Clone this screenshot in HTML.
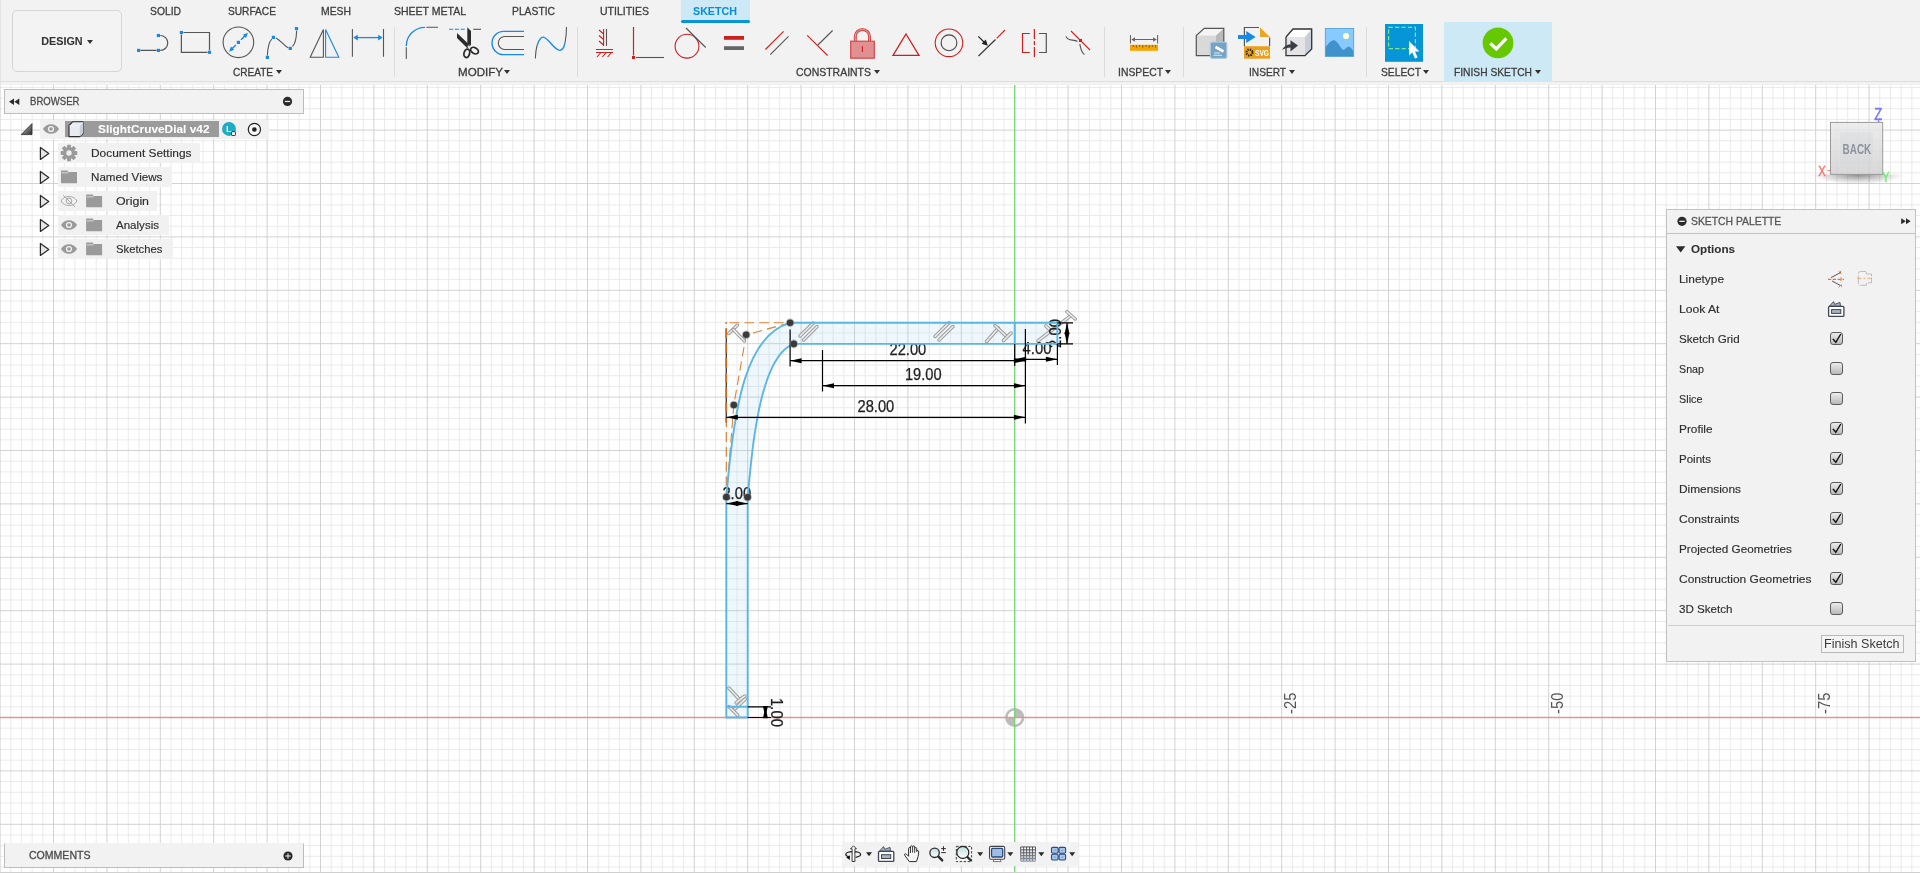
<!DOCTYPE html>
<html><head><meta charset="utf-8"><title>Fusion Sketch</title>
<style>
*{box-sizing:border-box}
html,body{margin:0;padding:0;width:1920px;height:873px;overflow:hidden;background:#fff;font-family:"Liberation Sans",sans-serif;color:#3c3c3c}
#app{position:relative;width:1920px;height:873px;overflow:hidden;will-change:transform}
.abs{position:absolute}
.t{position:absolute;white-space:nowrap;font-size:11.2px;line-height:13px;transform-origin:0 50%;color:#3c3c3c;-webkit-text-stroke:.3px currentColor}
.b{font-weight:700}
#toolbar{position:absolute;left:0;top:0;width:1920px;height:85px;background:#f2f2f2}
#toolbar .line{position:absolute;left:0;top:81px;width:1920px;height:1px;background:#dedede}
.sep{position:absolute;top:27px;width:1px;height:50px;background:#dcdcdc}
.dd{position:absolute;width:0;height:0;border-left:3px solid transparent;border-right:3px solid transparent;border-top:4px solid #333}
#design{position:absolute;left:12px;top:10px;width:110px;height:62px;border:1.5px solid #d6d6d6;border-radius:5px;background:#f3f3f3}
.panelhdr{position:absolute;background:#f2f2f2;border:1px solid #bdbdbd}
.rowbg{position:absolute;height:20px;background:#f1f1f1}
.cb{position:absolute;left:1829.6px;width:13.2px;height:12.8px;border:1px solid #5c5c5c;border-radius:3px;background:linear-gradient(#ececec,#b9b9b9)}
.cb svg{position:absolute;left:0;top:0}
svg{position:absolute;overflow:visible}
</style></head><body><div id="app">

<svg id="cv" width="1920" height="873" viewBox="0 0 1920 873" style="left:0;top:0">
<path d="M10.78 85V873M21.46 85V873M32.14 85V873M42.82 85V873M64.18 85V873M74.86 85V873M85.54 85V873M96.22 85V873M117.58 85V873M128.26 85V873M138.94 85V873M149.62 85V873M170.98 85V873M181.66 85V873M192.34 85V873M203.02 85V873M224.38 85V873M235.06 85V873M245.74 85V873M256.42 85V873M277.78 85V873M288.46 85V873M299.14 85V873M309.82 85V873M331.18 85V873M341.86 85V873M352.54 85V873M363.22 85V873M384.58 85V873M395.26 85V873M405.94 85V873M416.62 85V873M437.98 85V873M448.66 85V873M459.34 85V873M470.02 85V873M491.38 85V873M502.06 85V873M512.74 85V873M523.42 85V873M544.78 85V873M555.46 85V873M566.14 85V873M576.82 85V873M598.18 85V873M608.86 85V873M619.54 85V873M630.22 85V873M651.58 85V873M662.26 85V873M672.94 85V873M683.62 85V873M704.98 85V873M715.66 85V873M726.34 85V873M737.02 85V873M758.38 85V873M769.06 85V873M779.74 85V873M790.42 85V873M811.78 85V873M822.46 85V873M833.14 85V873M843.82 85V873M865.18 85V873M875.86 85V873M886.54 85V873M897.22 85V873M918.58 85V873M929.26 85V873M939.94 85V873M950.62 85V873M971.98 85V873M982.66 85V873M993.34 85V873M1004.02 85V873M1025.38 85V873M1036.06 85V873M1046.74 85V873M1057.42 85V873M1078.78 85V873M1089.46 85V873M1100.14 85V873M1110.82 85V873M1132.18 85V873M1142.86 85V873M1153.54 85V873M1164.22 85V873M1185.58 85V873M1196.26 85V873M1206.94 85V873M1217.62 85V873M1238.98 85V873M1249.66 85V873M1260.34 85V873M1271.02 85V873M1292.38 85V873M1303.06 85V873M1313.74 85V873M1324.42 85V873M1345.78 85V873M1356.46 85V873M1367.14 85V873M1377.82 85V873M1399.18 85V873M1409.86 85V873M1420.54 85V873M1431.22 85V873M1452.58 85V873M1463.26 85V873M1473.94 85V873M1484.62 85V873M1505.98 85V873M1516.66 85V873M1527.34 85V873M1538.02 85V873M1559.38 85V873M1570.06 85V873M1580.74 85V873M1591.42 85V873M1612.78 85V873M1623.46 85V873M1634.14 85V873M1644.82 85V873M1666.18 85V873M1676.86 85V873M1687.54 85V873M1698.22 85V873M1719.58 85V873M1730.26 85V873M1740.94 85V873M1751.62 85V873M1772.98 85V873M1783.66 85V873M1794.34 85V873M1805.02 85V873M1826.38 85V873M1837.06 85V873M1847.74 85V873M1858.42 85V873M1879.78 85V873M1890.46 85V873M1901.14 85V873M1911.82 85V873M0 87.38H1920M0 98.06H1920M0 108.74H1920M0 119.42H1920M0 140.78H1920M0 151.46H1920M0 162.14H1920M0 172.82H1920M0 194.18H1920M0 204.86H1920M0 215.54H1920M0 226.22H1920M0 247.58H1920M0 258.26H1920M0 268.94H1920M0 279.62H1920M0 300.98H1920M0 311.66H1920M0 322.34H1920M0 333.02H1920M0 354.38H1920M0 365.06H1920M0 375.74H1920M0 386.42H1920M0 407.78H1920M0 418.46H1920M0 429.14H1920M0 439.82H1920M0 461.18H1920M0 471.86H1920M0 482.54H1920M0 493.22H1920M0 514.58H1920M0 525.26H1920M0 535.94H1920M0 546.62H1920M0 567.98H1920M0 578.66H1920M0 589.34H1920M0 600.02H1920M0 621.38H1920M0 632.06H1920M0 642.74H1920M0 653.42H1920M0 674.78H1920M0 685.46H1920M0 696.14H1920M0 706.82H1920M0 728.18H1920M0 738.86H1920M0 749.54H1920M0 760.22H1920M0 781.58H1920M0 792.26H1920M0 802.94H1920M0 813.62H1920M0 834.98H1920M0 845.66H1920M0 856.34H1920M0 867.02H1920" stroke="#e8e8e8" stroke-width=".9" fill="none"/>
<path d="M0.10 85V873M53.50 85V873M106.90 85V873M160.30 85V873M213.70 85V873M267.10 85V873M320.50 85V873M373.90 85V873M427.30 85V873M480.70 85V873M534.10 85V873M587.50 85V873M640.90 85V873M694.30 85V873M747.70 85V873M801.10 85V873M854.50 85V873M907.90 85V873M961.30 85V873M1014.70 85V873M1068.10 85V873M1121.50 85V873M1174.90 85V873M1228.30 85V873M1281.70 85V873M1335.10 85V873M1388.50 85V873M1441.90 85V873M1495.30 85V873M1548.70 85V873M1602.10 85V873M1655.50 85V873M1708.90 85V873M1762.30 85V873M1815.70 85V873M1869.10 85V873M0 130.10H1920M0 183.50H1920M0 236.90H1920M0 290.30H1920M0 343.70H1920M0 397.10H1920M0 450.50H1920M0 503.90H1920M0 557.30H1920M0 610.70H1920M0 664.10H1920M0 717.50H1920M0 770.90H1920M0 824.30H1920" stroke="#cdcdcd" stroke-width=".9" fill="none"/>
<circle cx="1014.7" cy="717.5" r="8.3" fill="none" stroke="#bcbcbc" stroke-width="2.6"/>
<path d="M1014.7 717.5V709.2A8.3 8.3 0 0 1 1023.0 717.5Z M1014.7 717.5V725.8A8.3 8.3 0 0 1 1006.4000000000001 717.5Z" fill="#bcbcbc"/>
<line x1="0" y1="717.5" x2="1920" y2="717.5" stroke="#e89292" stroke-width="1.5"/>
<line x1="1014.7" y1="85" x2="1014.7" y2="873" stroke="#6fd66f" stroke-width="1.2"/>
<path d="M1057.4 322.8 L790.1 322.8 C746.2 334.8 733.8 405.0 726.4 497.0 L726.3 717.5 L747.7 717.5 L747.7 498.7 L747.7 498.7 L748.2 491.9 L748.8 485.3 L749.4 478.7 L750.1 472.2 L750.7 465.8 L751.4 459.6 L752.1 453.4 L752.8 447.4 L753.6 441.5 L754.4 435.8 L755.3 430.1 L756.2 424.6 L757.1 419.3 L758.1 414.1 L759.1 409.0 L760.2 404.1 L761.3 399.4 L762.5 394.8 L763.7 390.5 L765.0 386.3 L766.3 382.2 L767.6 378.4 L769.0 374.8 L770.4 371.3 L771.9 368.1 L773.4 365.1 L774.9 362.3 L776.5 359.7 L778.0 357.3 L779.6 355.2 L781.2 353.2 L782.8 351.5 L784.3 349.9 L785.9 348.5 L787.5 347.3 L789.0 346.3 L790.6 345.4 L792.3 344.6 L794.0 344.0 L795.7 343.4 L1057.4 343.9 Z" fill="rgba(120,190,235,0.13)" stroke="none"/>
<line x1="726.3" y1="328.6" x2="726.3" y2="422.6" stroke="#3a3a3a" stroke-width="1.3"/>
<path d="M726.3 322.8 H790.1" stroke="#dd8238" stroke-width="1.1" stroke-dasharray="9.8 5" stroke-dashoffset="11.5" fill="none"/>
<path d="M726.3 322.8 V497.0" stroke="#dd8238" stroke-width="1.2" stroke-dasharray="9.8 5" stroke-dashoffset="9.1" fill="none"/>
<rect x="725.5" y="322.1" width="1.6" height="1.4" fill="#dd8238"/>
<path d="M726.3 322.8 V422.6" stroke="#c8691c" stroke-width="1.6" stroke-dasharray="9.8 5" stroke-dashoffset="9.1" fill="none"/>
<path d="M790.1 322.8 L746.2 334.8 L733.8 405.0 L726.4 497.0" stroke="#dd8238" stroke-width="1.1" stroke-dasharray="9.5 5" fill="none"/>
<g opacity=".95"><line x1="728.8" y1="333.5" x2="737.2" y2="325.3" stroke="#969696" stroke-width="3.5" stroke-linecap="round"/><line x1="728.8" y1="333.5" x2="737.2" y2="325.3" stroke="#ececec" stroke-width="1.6" stroke-linecap="round"/><line x1="733.3" y1="329.6" x2="744.5" y2="341.0" stroke="#969696" stroke-width="3.5" stroke-linecap="round"/><line x1="733.3" y1="329.6" x2="744.5" y2="341.0" stroke="#ececec" stroke-width="1.6" stroke-linecap="round"/><line x1="800.0" y1="336.0" x2="813.0" y2="323.2" stroke="#969696" stroke-width="3.5" stroke-linecap="round"/><line x1="800.0" y1="336.0" x2="813.0" y2="323.2" stroke="#ececec" stroke-width="1.6" stroke-linecap="round"/><line x1="803.6" y1="340.0" x2="817.0" y2="326.5" stroke="#969696" stroke-width="3.5" stroke-linecap="round"/><line x1="803.6" y1="340.0" x2="817.0" y2="326.5" stroke="#ececec" stroke-width="1.6" stroke-linecap="round"/><line x1="935.0" y1="336.5" x2="949.0" y2="322.8" stroke="#969696" stroke-width="3.5" stroke-linecap="round"/><line x1="935.0" y1="336.5" x2="949.0" y2="322.8" stroke="#ececec" stroke-width="1.6" stroke-linecap="round"/><line x1="939.0" y1="340.0" x2="953.0" y2="326.5" stroke="#969696" stroke-width="3.5" stroke-linecap="round"/><line x1="939.0" y1="340.0" x2="953.0" y2="326.5" stroke="#ececec" stroke-width="1.6" stroke-linecap="round"/><line x1="986.5" y1="341.5" x2="998.5" y2="328.0" stroke="#969696" stroke-width="3.5" stroke-linecap="round"/><line x1="986.5" y1="341.5" x2="998.5" y2="328.0" stroke="#ececec" stroke-width="1.6" stroke-linecap="round"/><line x1="995.0" y1="325.5" x2="1006.0" y2="336.0" stroke="#969696" stroke-width="3.5" stroke-linecap="round"/><line x1="995.0" y1="325.5" x2="1006.0" y2="336.0" stroke="#ececec" stroke-width="1.6" stroke-linecap="round"/><line x1="1003.5" y1="340.5" x2="1011.0" y2="333.0" stroke="#969696" stroke-width="3.5" stroke-linecap="round"/><line x1="1003.5" y1="340.5" x2="1011.0" y2="333.0" stroke="#ececec" stroke-width="1.6" stroke-linecap="round"/><line x1="1038.0" y1="340.8" x2="1070.5" y2="315.8" stroke="#969696" stroke-width="3.5" stroke-linecap="round"/><line x1="1038.0" y1="340.8" x2="1070.5" y2="315.8" stroke="#ececec" stroke-width="1.6" stroke-linecap="round"/><line x1="1066.9" y1="311.8" x2="1075.2" y2="319.0" stroke="#969696" stroke-width="3.5" stroke-linecap="round"/><line x1="1066.9" y1="311.8" x2="1075.2" y2="319.0" stroke="#ececec" stroke-width="1.6" stroke-linecap="round"/><line x1="1045.8" y1="325.9" x2="1049.6" y2="329.6" stroke="#969696" stroke-width="3.5" stroke-linecap="round"/><line x1="1045.8" y1="325.9" x2="1049.6" y2="329.6" stroke="#ececec" stroke-width="1.6" stroke-linecap="round"/><line x1="728.9" y1="688.0" x2="739.8" y2="699.8" stroke="#969696" stroke-width="3.5" stroke-linecap="round"/><line x1="728.9" y1="688.0" x2="739.8" y2="699.8" stroke="#ececec" stroke-width="1.6" stroke-linecap="round"/><line x1="736.1" y1="702.9" x2="744.9" y2="696.0" stroke="#969696" stroke-width="3.5" stroke-linecap="round"/><line x1="736.1" y1="702.9" x2="744.9" y2="696.0" stroke="#ececec" stroke-width="1.6" stroke-linecap="round"/><line x1="745.3" y1="698.9" x2="733.3" y2="710.5" stroke="#969696" stroke-width="3.5" stroke-linecap="round"/><line x1="745.3" y1="698.9" x2="733.3" y2="710.5" stroke="#ececec" stroke-width="1.6" stroke-linecap="round"/><line x1="728.9" y1="706.5" x2="737.7" y2="715.3" stroke="#969696" stroke-width="3.5" stroke-linecap="round"/><line x1="728.9" y1="706.5" x2="737.7" y2="715.3" stroke="#ececec" stroke-width="1.6" stroke-linecap="round"/></g>
<text x="907.9" y="355.3" font-family="Liberation Sans, sans-serif" font-size="15.6" text-anchor="middle" fill="#1e1e1e" stroke="#1e1e1e" stroke-width="0.25" textLength="36.8" lengthAdjust="spacingAndGlyphs">22.00</text>
<text x="923.3" y="380.2" font-family="Liberation Sans, sans-serif" font-size="15.6" text-anchor="middle" fill="#1e1e1e" stroke="#1e1e1e" stroke-width="0.25" textLength="36.8" lengthAdjust="spacingAndGlyphs">19.00</text>
<text x="875.9" y="411.8" font-family="Liberation Sans, sans-serif" font-size="15.6" text-anchor="middle" fill="#1e1e1e" stroke="#1e1e1e" stroke-width="0.25" textLength="36.8" lengthAdjust="spacingAndGlyphs">28.00</text>
<text x="1037.0" y="353.8" font-family="Liberation Sans, sans-serif" font-size="15.6" text-anchor="middle" fill="#1e1e1e" stroke="#1e1e1e" stroke-width="0.25" textLength="28.8" lengthAdjust="spacingAndGlyphs">4.00</text>
<text x="736.8" y="499.3" font-family="Liberation Sans, sans-serif" font-size="15.6" text-anchor="middle" fill="#1e1e1e" stroke="#1e1e1e" stroke-width="0.25" textLength="28.8" lengthAdjust="spacingAndGlyphs">2.00</text>
<text x="1060.6" y="333.5" font-family="Liberation Sans, sans-serif" font-size="15.6" text-anchor="middle" fill="#1e1e1e" stroke="#1e1e1e" stroke-width="0.25" textLength="28.8" lengthAdjust="spacingAndGlyphs" transform="rotate(-90 1060.6 333.5)">2.00</text>
<text x="770.5" y="712.5" font-family="Liberation Sans, sans-serif" font-size="15.6" text-anchor="middle" fill="#1e1e1e" stroke="#1e1e1e" stroke-width="0.25" textLength="28.8" lengthAdjust="spacingAndGlyphs" transform="rotate(90 770.5 712.5)">1.00</text>
<path d="M790.1 322.8 C746.2 334.8 733.8 405.0 726.4 497.0 M795.7 343.4 L794.0 344.0 L792.3 344.6 L790.6 345.4 L789.0 346.3 L787.5 347.3 L785.9 348.5 L784.3 349.9 L782.8 351.5 L781.2 353.2 L779.6 355.2 L778.0 357.3 L776.5 359.7 L774.9 362.3 L773.4 365.1 L771.9 368.1 L770.4 371.3 L769.0 374.8 L767.6 378.4 L766.3 382.2 L765.0 386.3 L763.7 390.5 L762.5 394.8 L761.3 399.4 L760.2 404.1 L759.1 409.0 L758.1 414.1 L757.1 419.3 L756.2 424.6 L755.3 430.1 L754.4 435.8 L753.6 441.5 L752.8 447.4 L752.1 453.4 L751.4 459.6 L750.7 465.8 L750.1 472.2 L749.4 478.7 L748.8 485.3 L748.2 491.9 L747.7 498.7 M790.1 322.8 H1057.4 V343.9 H795.7 M1014.7 322.8 V343.9 M726.3 497.0 V717.5 H747.7 V498.7 M726.3 706.8 H747.7" stroke="#5cb6e4" stroke-width="1.9" fill="none" stroke-linejoin="miter"/>
<path d="M790.1 329.5V366.5 M822.5 350V391.5 M1025.4 329V423.5 M1014.7 344V366 M1057.4 344V365 M790.1 360.7H1025.4 M822.5 385.7H1025.4 M726.3 417.3H1025.4 M1014.7 359.3H1057.4 M1057.4 322.8H1073 M1057.4 343.9H1073 M1067 322.8V343.9 M747.7 706.8H771 M747.7 717.5H771 M765.4 706.8V717.5 M726.3 503.6H747.7" stroke="#000" stroke-width="1.2" fill="none"/>
<polygon points="790.1,360.7 801.6,358.2 801.6,363.2" fill="#000"/>
<polygon points="1025.4,360.7 1013.9,363.2 1013.9,358.2" fill="#000"/>
<polygon points="822.5,385.7 834.0,383.2 834.0,388.2" fill="#000"/>
<polygon points="1025.4,385.7 1013.9,388.2 1013.9,383.2" fill="#000"/>
<polygon points="726.3,417.3 737.8,414.8 737.8,419.8" fill="#000"/>
<polygon points="1025.4,417.3 1013.9,419.8 1013.9,414.8" fill="#000"/>
<polygon points="1014.7,359.3 1026.2,356.8 1026.2,361.8" fill="#000"/>
<polygon points="1057.4,359.3 1045.9,361.8 1045.9,356.8" fill="#000"/>
<polygon points="1067.0,322.8 1069.5,334.3 1064.5,334.3" fill="#000"/>
<polygon points="1067.0,343.9 1064.5,332.4 1069.5,332.4" fill="#000"/>
<polygon points="726.3,503.6 737.8,501.1 737.8,506.1" fill="#000"/>
<polygon points="747.7,503.6 736.2,506.1 736.2,501.1" fill="#000"/>
<polygon points="765.4,706.8 767.9,718.3 762.9,718.3" fill="#000"/>
<polygon points="765.4,717.5 762.9,706.0 767.9,706.0" fill="#000"/>
<circle cx="790.1" cy="322.8" r="4.3" fill="#8a8a8a" opacity=".55"/><circle cx="790.1" cy="322.8" r="3.3" fill="#3a3a3a"/>
<circle cx="746.2" cy="334.8" r="4.3" fill="#8a8a8a" opacity=".55"/><circle cx="746.2" cy="334.8" r="3.3" fill="#3a3a3a"/>
<circle cx="733.8" cy="405.0" r="4.3" fill="#8a8a8a" opacity=".55"/><circle cx="733.8" cy="405.0" r="3.3" fill="#3a3a3a"/>
<circle cx="726.4" cy="497.0" r="4.3" fill="#8a8a8a" opacity=".55"/><circle cx="726.4" cy="497.0" r="3.3" fill="#3a3a3a"/>
<circle cx="793.8" cy="343.9" r="4.3" fill="#8a8a8a" opacity=".55"/><circle cx="793.8" cy="343.9" r="3.3" fill="#3a3a3a"/>
<circle cx="747.6" cy="497.3" r="4.3" fill="#8a8a8a" opacity=".55"/><circle cx="747.6" cy="497.3" r="3.3" fill="#3a3a3a"/>
<text x="1295.9" y="713.9" font-family="Liberation Sans, sans-serif" font-size="16.4" text-anchor="start" fill="#555" stroke="#555" stroke-width="0" textLength="21.2" lengthAdjust="spacingAndGlyphs" transform="rotate(-90 1295.9 713.9)">-25</text>
<text x="1562.9" y="713.9" font-family="Liberation Sans, sans-serif" font-size="16.4" text-anchor="start" fill="#555" stroke="#555" stroke-width="0" textLength="21.2" lengthAdjust="spacingAndGlyphs" transform="rotate(-90 1562.9 713.9)">-50</text>
<text x="1829.9" y="713.9" font-family="Liberation Sans, sans-serif" font-size="16.4" text-anchor="start" fill="#555" stroke="#555" stroke-width="0" textLength="21.2" lengthAdjust="spacingAndGlyphs" transform="rotate(-90 1829.9 713.9)">-75</text>
</svg>
<svg width="120" height="100" viewBox="1800 100 120 100" style="left:1800px;top:100px"><defs><linearGradient id="vg" x1="0" y1="0" x2="0" y2="1"><stop offset="0" stop-color="#e9e9e9"/><stop offset="1" stop-color="#cfcfcf"/></linearGradient><radialGradient id="sh" cx=".5" cy="0" r=".5" gradientTransform="matrix(1 0 0 2 0 0)"><stop offset="0" stop-color="#000" stop-opacity=".45"/><stop offset=".6" stop-color="#000" stop-opacity=".16"/><stop offset="1" stop-color="#000" stop-opacity="0"/></radialGradient></defs><rect x="1812" y="174.4" width="92" height="10" fill="url(#sh)"/><rect x="1830.5" y="122.4" width="52.2" height="52" fill="url(#vg)" fill-opacity=".82" stroke="#999" stroke-width="1"/><rect x="1840" y="132" width="33" height="33" fill="#d5d7dc" fill-opacity=".4"/><text x="1842.6" y="153.9" font-family="Liberation Sans, sans-serif" font-weight="700" font-size="14.6" fill="#8d929c" textLength="28.6" lengthAdjust="spacingAndGlyphs">BACK</text><text x="1874.2" y="119.9" font-family="Liberation Sans, sans-serif" font-size="16" fill="#7878f2" stroke="#7878f2" stroke-width=".4" textLength="8" lengthAdjust="spacingAndGlyphs">Z</text><text x="1818.3" y="175.8" font-family="Liberation Sans, sans-serif" font-size="14.5" fill="#ff6a6a" stroke="#ff6a6a" stroke-width=".4" textLength="7.5" lengthAdjust="spacingAndGlyphs">X</text><text x="1882.2" y="182.3" font-family="Liberation Sans, sans-serif" font-size="14.5" fill="#6cec6c" stroke="#6cec6c" stroke-width=".4" textLength="7.2" lengthAdjust="spacingAndGlyphs">Y</text><path d="M1827.5 170.5H1830" stroke="#ff8080" stroke-width="1.2"/><path d="M1878.5 120.3V122" stroke="#7878f2" stroke-width="1.2"/></svg>
<div class="panelhdr" style="left:4px;top:89px;width:300px;height:24.5px"></div>
<div class="t" style="left:29.5px;top:95.2px;font-size:11.2px;line-height:13px;color:#4a4a4a;transform:scaleX(0.856);">BROWSER</div>
<div class="rowbg" style="left:40px;top:120.3px;width:228.7px;height:18.5px"></div>
<div class="abs" style="left:65px;top:121px;width:154px;height:16px;background:#9b9b9b"></div>
<div class="rowbg" style="left:58.3px;top:143.3px;width:141.5px;height:19.4px"></div>
<div class="rowbg" style="left:58.3px;top:167.3px;width:113.5px;height:19.4px"></div>
<div class="rowbg" style="left:58.3px;top:191.3px;width:98.6px;height:19.4px"></div>
<div class="rowbg" style="left:58.3px;top:215.3px;width:110.6px;height:19.4px"></div>
<div class="rowbg" style="left:58.3px;top:239.3px;width:114.3px;height:19.4px"></div>
<div class="t" style="left:98.0px;top:122.6px;font-size:11.2px;line-height:13px;font-weight:700;color:#fff;transform:scaleX(1.061);-webkit-text-stroke-width:.05px;">SlightCruveDial v42</div>
<div class="t" style="left:90.5px;top:146.6px;font-size:11.2px;line-height:13px;color:#2e2e2e;transform:scaleX(1.063);-webkit-text-stroke-width:.15px;">Document Settings</div>
<div class="t" style="left:91.0px;top:170.6px;font-size:11.2px;line-height:13px;color:#2e2e2e;transform:scaleX(1.037);-webkit-text-stroke-width:.15px;">Named Views</div>
<div class="t" style="left:116.0px;top:194.6px;font-size:11.2px;line-height:13px;color:#2e2e2e;transform:scaleX(1.106);-webkit-text-stroke-width:.15px;">Origin</div>
<div class="t" style="left:116.0px;top:218.6px;font-size:11.2px;line-height:13px;color:#2e2e2e;transform:scaleX(1.032);-webkit-text-stroke-width:.15px;">Analysis</div>
<div class="t" style="left:116.0px;top:242.6px;font-size:11.2px;line-height:13px;color:#2e2e2e;transform:scaleX(1.006);-webkit-text-stroke-width:.15px;">Sketches</div>
<svg width="320" height="270" viewBox="0 0 320 270" style="left:0;top:0"><defs><linearGradient id="tg" x1="0" y1="0" x2="1" y2="1"><stop offset="0" stop-color="#d0d0d0"/><stop offset="1" stop-color="#2a2a2a"/></linearGradient></defs><polygon points="9,101.8 14,98.6 14,105" fill="#2a2a2a"/><polygon points="14.3,101.8 19.3,98.6 19.3,105" fill="#2a2a2a"/><circle cx="287.5" cy="101.4" r="4.6" fill="#2a2a2a"/><rect x="284.8" y="100.8" width="5.4" height="1.3" fill="#e8e8e8"/><polygon points="21.2,134.6 32,134.6 32,123.6" fill="url(#tg)" stroke="#2a2a2a" stroke-width=".8"/><path d="M43 129C46 122.7 56 122.7 59 129C56 135.3 46 135.3 43 129Z" fill="#9a9a9a"/><circle cx="51" cy="129" r="3.1" fill="#f0f0f0"/><circle cx="51" cy="129" r="1.8" fill="#9a9a9a"/><path d="M69 125.5L72.5 121.8H83.3V133L79.8 136.6H69Z" fill="#e8ebf1" stroke="#2c2c2c" stroke-width="1.1" stroke-linejoin="round"/><path d="M79.8 125.5V136.6L83.3 133V121.8Z" fill="#c9ced8"/><path d="M69 125.5H79.8L83.3 121.8" fill="none" stroke="#fff" stroke-width=".6" opacity=".7"/><circle cx="229" cy="128.9" r="7" fill="#1eabc4"/><text x="226" y="132.3" font-family="Liberation Sans, sans-serif" font-weight="700" font-size="9.5" fill="#e8f8fb">L</text><rect x="231.6" y="131.7" width="3.8" height="3.8" rx=".6" fill="#fff" stroke="#222" stroke-width=".9"/><circle cx="254.4" cy="129.5" r="6.1" fill="#f8f8f8" stroke="#222" stroke-width="1.2"/><circle cx="254.4" cy="129.5" r="2.3" fill="#222"/><path d="M40.4 147.4L48.8 153.4L40.4 159.4Z" fill="#e6e6ea" stroke="#2a2a2a" stroke-width="1.25" stroke-linejoin="round"/><path d="M40.4 171.4L48.8 177.4L40.4 183.4Z" fill="#e6e6ea" stroke="#2a2a2a" stroke-width="1.25" stroke-linejoin="round"/><path d="M40.4 195.4L48.8 201.4L40.4 207.4Z" fill="#e6e6ea" stroke="#2a2a2a" stroke-width="1.25" stroke-linejoin="round"/><path d="M40.4 219.4L48.8 225.4L40.4 231.4Z" fill="#e6e6ea" stroke="#2a2a2a" stroke-width="1.25" stroke-linejoin="round"/><path d="M40.4 243.4L48.8 249.4L40.4 255.4Z" fill="#e6e6ea" stroke="#2a2a2a" stroke-width="1.25" stroke-linejoin="round"/><rect x="67.1" y="144.7" width="3.8" height="16.6" rx=".6" fill="#9a9a9a" transform="rotate(0 69 153)"/><rect x="67.1" y="144.7" width="3.8" height="16.6" rx=".6" fill="#9a9a9a" transform="rotate(45 69 153)"/><rect x="67.1" y="144.7" width="3.8" height="16.6" rx=".6" fill="#9a9a9a" transform="rotate(90 69 153)"/><rect x="67.1" y="144.7" width="3.8" height="16.6" rx=".6" fill="#9a9a9a" transform="rotate(135 69 153)"/><circle cx="69" cy="153" r="6" fill="#9a9a9a"/><circle cx="69" cy="153" r="2.7" fill="#f0f0f0"/><path d="M61 170.6H67.5L68.5 172H77V183.3H61Z" fill="#9a9a9a"/><path d="M61.5 172.8H68.5" stroke="#f0f0f0" stroke-width=".7"/><path d="M61 201C64 195 74 195 77 201C74 207 64 207 61 201Z" fill="none" stroke="#a8a8a8" stroke-width="1"/><circle cx="69" cy="201" r="2.8" fill="none" stroke="#a8a8a8" stroke-width="1"/><path d="M63 195L75 207" stroke="#a8a8a8" stroke-width="1"/><path d="M86.1 194.6H92.6L93.6 196H102.1V207.3H86.1Z" fill="#9a9a9a"/><path d="M86.6 196.8H93.6" stroke="#f0f0f0" stroke-width=".7"/><path d="M61 225C64 218.7 74 218.7 77 225C74 231.3 64 231.3 61 225Z" fill="#9a9a9a"/><circle cx="69" cy="225" r="3.1" fill="#f0f0f0"/><circle cx="69" cy="225" r="1.8" fill="#9a9a9a"/><path d="M86.1 218.6H92.6L93.6 220H102.1V231.3H86.1Z" fill="#9a9a9a"/><path d="M86.6 220.8H93.6" stroke="#f0f0f0" stroke-width=".7"/><path d="M61 249C64 242.7 74 242.7 77 249C74 255.3 64 255.3 61 249Z" fill="#9a9a9a"/><circle cx="69" cy="249" r="3.1" fill="#f0f0f0"/><circle cx="69" cy="249" r="1.8" fill="#9a9a9a"/><path d="M86.1 242.6H92.6L93.6 244H102.1V255.3H86.1Z" fill="#9a9a9a"/><path d="M86.6 244.8H93.6" stroke="#f0f0f0" stroke-width=".7"/></svg>
<div class="panelhdr" style="left:4px;top:843px;width:300px;height:24.5px;border-top-color:#f2f2f2"></div>
<div class="t" style="left:29.4px;top:849.1px;font-size:11.2px;line-height:13px;color:#4a4a4a;transform:scaleX(0.942);">COMMENTS</div>
<svg width="20" height="20" viewBox="0 0 20 20" style="left:277.5px;top:845.5px"><circle cx="10" cy="10" r="4.6" fill="#2a2a2a"/><path d="M7.3 10H12.7M10 7.3V12.7" stroke="#f4f4f4" stroke-width="1"/></svg>
<div class="abs" style="left:1666px;top:209px;width:250px;height:452.5px;background:#f2f2f2;border:1px solid #c2c2c2"></div>
<div class="abs" style="left:1666px;top:233px;width:250px;height:1px;background:#c2c2c2"></div>
<div class="abs" style="left:1667.5px;top:625px;width:247px;height:1px;background:#cfcfcf"></div>
<div class="t" style="left:1691.0px;top:215.1px;font-size:11.2px;line-height:13px;color:#555;transform:scaleX(0.927);">SKETCH PALETTE</div>
<div class="t" style="left:1691.0px;top:242.9px;font-size:11.2px;line-height:13px;font-weight:700;color:#2e2e2e;transform:scaleX(1.041);-webkit-text-stroke-width:.05px;">Options</div>
<div class="t" style="left:1679.3px;top:273.1px;font-size:11.2px;line-height:13px;color:#2e2e2e;transform:scaleX(1.064);-webkit-text-stroke-width:.15px;">Linetype</div>
<div class="t" style="left:1679.3px;top:303.1px;font-size:11.2px;line-height:13px;color:#2e2e2e;transform:scaleX(1.085);-webkit-text-stroke-width:.15px;">Look At</div>
<div class="t" style="left:1679.3px;top:333.1px;font-size:11.2px;line-height:13px;color:#2e2e2e;transform:scaleX(1.037);-webkit-text-stroke-width:.15px;">Sketch Grid</div>
<div class="t" style="left:1679.3px;top:363.1px;font-size:11.2px;line-height:13px;color:#2e2e2e;transform:scaleX(0.956);-webkit-text-stroke-width:.15px;">Snap</div>
<div class="t" style="left:1679.3px;top:393.1px;font-size:11.2px;line-height:13px;color:#2e2e2e;transform:scaleX(0.969);-webkit-text-stroke-width:.15px;">Slice</div>
<div class="t" style="left:1679.3px;top:423.1px;font-size:11.2px;line-height:13px;color:#2e2e2e;transform:scaleX(1.056);-webkit-text-stroke-width:.15px;">Profile</div>
<div class="t" style="left:1679.3px;top:453.1px;font-size:11.2px;line-height:13px;color:#2e2e2e;transform:scaleX(1.029);-webkit-text-stroke-width:.15px;">Points</div>
<div class="t" style="left:1679.3px;top:483.1px;font-size:11.2px;line-height:13px;color:#2e2e2e;transform:scaleX(1.061);-webkit-text-stroke-width:.15px;">Dimensions</div>
<div class="t" style="left:1679.3px;top:513.1px;font-size:11.2px;line-height:13px;color:#2e2e2e;transform:scaleX(1.069);-webkit-text-stroke-width:.15px;">Constraints</div>
<div class="t" style="left:1679.3px;top:543.1px;font-size:11.2px;line-height:13px;color:#2e2e2e;transform:scaleX(1.044);-webkit-text-stroke-width:.15px;">Projected Geometries</div>
<div class="t" style="left:1679.3px;top:573.1px;font-size:11.2px;line-height:13px;color:#2e2e2e;transform:scaleX(1.071);-webkit-text-stroke-width:.15px;">Construction Geometries</div>
<div class="t" style="left:1679.3px;top:603.1px;font-size:11.2px;line-height:13px;color:#2e2e2e;transform:scaleX(1.036);-webkit-text-stroke-width:.15px;">3D Sketch</div>
<div class="cb" style="top:332.1px"><svg width="13" height="13" viewBox="0 0 13 13" style="left:-1px;top:-1px"><path d="M2.9 6.9L5.8 10.3L10.8 2" stroke="#111" stroke-width="1.45" fill="none"/></svg></div>
<div class="cb" style="top:362.1px"></div>
<div class="cb" style="top:392.1px"></div>
<div class="cb" style="top:422.1px"><svg width="13" height="13" viewBox="0 0 13 13" style="left:-1px;top:-1px"><path d="M2.9 6.9L5.8 10.3L10.8 2" stroke="#111" stroke-width="1.45" fill="none"/></svg></div>
<div class="cb" style="top:452.1px"><svg width="13" height="13" viewBox="0 0 13 13" style="left:-1px;top:-1px"><path d="M2.9 6.9L5.8 10.3L10.8 2" stroke="#111" stroke-width="1.45" fill="none"/></svg></div>
<div class="cb" style="top:482.1px"><svg width="13" height="13" viewBox="0 0 13 13" style="left:-1px;top:-1px"><path d="M2.9 6.9L5.8 10.3L10.8 2" stroke="#111" stroke-width="1.45" fill="none"/></svg></div>
<div class="cb" style="top:512.1px"><svg width="13" height="13" viewBox="0 0 13 13" style="left:-1px;top:-1px"><path d="M2.9 6.9L5.8 10.3L10.8 2" stroke="#111" stroke-width="1.45" fill="none"/></svg></div>
<div class="cb" style="top:542.1px"><svg width="13" height="13" viewBox="0 0 13 13" style="left:-1px;top:-1px"><path d="M2.9 6.9L5.8 10.3L10.8 2" stroke="#111" stroke-width="1.45" fill="none"/></svg></div>
<div class="cb" style="top:572.1px"><svg width="13" height="13" viewBox="0 0 13 13" style="left:-1px;top:-1px"><path d="M2.9 6.9L5.8 10.3L10.8 2" stroke="#111" stroke-width="1.45" fill="none"/></svg></div>
<div class="cb" style="top:602.1px"></div>
<div class="abs" style="left:1820.5px;top:634.5px;width:83.5px;height:18px;border:1px solid #b9b9b9;background:#f4f4f4"></div>
<div class="t" style="left:1824.0px;top:636.4px;font-size:13px;line-height:15px;color:#3a3a3a;transform:scaleX(0.967);-webkit-text-stroke-width:.15px;-webkit-text-stroke:0;">Finish Sketch</div>
<svg width="260" height="120" viewBox="1660 205 260 120" style="left:1660px;top:205px"><circle cx="1682" cy="221.3" r="4.6" fill="#2a2a2a"/><rect x="1679.3" y="220.7" width="5.4" height="1.3" fill="#e8e8e8"/><polygon points="1901.2,218.3 1905.8,221.3 1901.2,224.3" fill="#2a2a2a"/><polygon points="1906,218.3 1910.6,221.3 1906,224.3" fill="#2a2a2a"/><polygon points="1676,246.3 1685.4,246.3 1680.7,252.6" fill="#2a2a2a"/><path d="M1828 279.3H1844" stroke="#e07a28" stroke-width="1.2" stroke-dasharray="3.2 1.6"/><path d="M1831 277.6L1841 272.3 M1832 281L1842 286.3" stroke="#555" stroke-width="1"/><path d="M1838.5 271.2L1841.5 274 M1841.2 270.8L1839 273.5 M1838.5 287.3L1841.5 284.5 M1841 277.4V281.3" stroke="#e07a28" stroke-width="1"/><path d="M1866 271.5H1860.5Q1858.3 271.5 1858.3 273.7V283Q1858.3 285.3 1860.5 285.3H1866.5V282.8H1871.5V274H1866.5Z" stroke="#bdbdbd" stroke-width="1" fill="none" stroke-dasharray="9 1.5"/><path d="M1857 278.4H1873" stroke="#f2b78d" stroke-width="1.1" stroke-dasharray="4.5 2 1.8 2"/><path d="M1829.3 306.2L1833.6 301.6L1834.6 304.4L1840 302.4L1840.5 306.2Z" fill="#aab3c4" stroke="#3d4654" stroke-width=".9" stroke-linejoin="round"/><rect x="1828.6" y="306.4" width="15.3" height="10" rx="1" fill="#fff" stroke="#3d4654" stroke-width="1.3"/><rect x="1831.6" y="309.6" width="9.2" height="3.8" fill="#aab3c4" stroke="#3d4654" stroke-width="1"/></svg>
<div class="abs" style="left:842.3px;top:842.3px;width:236px;height:23.5px;background:#f2f2f2"></div>
<svg width="240" height="30" viewBox="840 840 240 30" style="left:840px;top:840px"><defs><linearGradient id="gg" x1="0" y1="0" x2="0" y2="1"><stop offset="0" stop-color="#3e3e3e"/><stop offset="1" stop-color="#8f97a8"/></linearGradient><linearGradient id="lg" x1="0" y1="0" x2="0" y2="1"><stop offset="0" stop-color="#bfdcdf"/><stop offset="1" stop-color="#fff"/></linearGradient></defs><ellipse cx="853.2" cy="854.6" rx="7.4" ry="2.9" fill="none" stroke="#222" stroke-width="1.2" stroke-dasharray="34 6" stroke-dashoffset="-12"/><path d="M852.1 861.5V848.8H850.6L853.5 845.8L856.4 848.8H854.9V861.5Z" fill="#fff" stroke="#222" stroke-width=".9"/><polygon points="846.2,857.6 849.8,855.2 849.8,860" fill="#111"/><polygon points="866,852.2 872,852.2 869,856.2" fill="#2a2a2a"/><path d="M879.4 851.2L883.6 846.5L884.6 849.4L890 847.4L890.5 851.2Z" fill="#aab3c4" stroke="#3d4654" stroke-width=".9" stroke-linejoin="round"/><rect x="878.5" y="851.4" width="15.3" height="10" rx="1" fill="#fff" stroke="#3d4654" stroke-width="1.3"/><rect x="881.5" y="854.7" width="9.2" height="3.8" fill="#aab3c4" stroke="#3d4654" stroke-width="1"/><path d="M909.3 861.6C907.5 859 906 857 904.6 855.2C904 854 905.5 853.3 906.6 854.3L908.6 856.3V848.6C908.6 847.2 910.4 847.2 910.5 848.6V846.8C910.6 845.5 912.5 845.5 912.6 846.8V846.6C912.7 845.6 914.6 845.6 914.7 846.8V848.3C914.8 847.2 916.6 847.2 916.7 848.5V851.5C917 850 918.8 850.2 918.7 851.8C918.6 855 918 858 916.3 861.6Z" fill="#f4f6f8" stroke="#2a2a2a" stroke-width="1" stroke-linejoin="round"/><path d="M910.5 848.6V853 M912.6 846.8V852.6 M914.7 848V852.8" stroke="#2a2a2a" stroke-width=".9"/><path d="M938 856.2L942.2 860.4" stroke="#2a2a2a" stroke-width="2.4" stroke-linecap="round"/><circle cx="934.6" cy="852.8" r="4.7" fill="url(#lg)" stroke="#2a2a2a" stroke-width="1.3"/><path d="M941.2 848.6H945.8 M943.5 846.3V850.9 M941.2 852.6H945.8" stroke="#2a2a2a" stroke-width="1"/><rect x="956.3" y="846.4" width="15.3" height="15.2" fill="none" stroke="#2a2a2a" stroke-width=".9" stroke-dasharray="2.4 1.6"/><path d="M967.2 856.8L970.6 860.2" stroke="#2a2a2a" stroke-width="2.3" stroke-linecap="round"/><circle cx="962.8" cy="852.4" r="6" fill="url(#lg)" stroke="#222" stroke-width="1.2"/><polygon points="977.2,852.2 983.2,852.2 980.2,856.2" fill="#2a2a2a"/><path d="M994 859.3L993.2 861.6H1001L1000.2 859.3Z" fill="#fff" stroke="#555" stroke-width=".8"/><rect x="989.5" y="846.4" width="15.2" height="12.8" rx="1.5" fill="#fff" stroke="#444" stroke-width="1.1"/><rect x="991.5" y="848.4" width="11.2" height="8.6" rx="1" fill="#9fbde1" stroke="#2a4a80" stroke-width="1.3"/><polygon points="1007.3,852.2 1013.3,852.2 1010.3,856.2" fill="#2a2a2a"/><rect x="1020.2" y="846.4" width="15.7" height="15.4" rx="1.2" fill="url(#gg)"/><rect x="1021.20" y="847.40" width="2" height="1.95" fill="#fff" fill-opacity="1.00"/><rect x="1021.20" y="850.30" width="2" height="1.95" fill="#fff" fill-opacity="0.87"/><rect x="1021.20" y="853.20" width="2" height="1.95" fill="#fff" fill-opacity="0.74"/><rect x="1021.20" y="856.10" width="2" height="1.95" fill="#fff" fill-opacity="0.61"/><rect x="1021.20" y="859.00" width="2" height="1.95" fill="#fff" fill-opacity="0.48"/><rect x="1024.15" y="847.40" width="2" height="1.95" fill="#fff" fill-opacity="1.00"/><rect x="1024.15" y="850.30" width="2" height="1.95" fill="#fff" fill-opacity="0.87"/><rect x="1024.15" y="853.20" width="2" height="1.95" fill="#fff" fill-opacity="0.74"/><rect x="1024.15" y="856.10" width="2" height="1.95" fill="#fff" fill-opacity="0.61"/><rect x="1024.15" y="859.00" width="2" height="1.95" fill="#fff" fill-opacity="0.48"/><rect x="1027.10" y="847.40" width="2" height="1.95" fill="#fff" fill-opacity="1.00"/><rect x="1027.10" y="850.30" width="2" height="1.95" fill="#fff" fill-opacity="0.87"/><rect x="1027.10" y="853.20" width="2" height="1.95" fill="#fff" fill-opacity="0.74"/><rect x="1027.10" y="856.10" width="2" height="1.95" fill="#fff" fill-opacity="0.61"/><rect x="1027.10" y="859.00" width="2" height="1.95" fill="#fff" fill-opacity="0.48"/><rect x="1030.05" y="847.40" width="2" height="1.95" fill="#fff" fill-opacity="1.00"/><rect x="1030.05" y="850.30" width="2" height="1.95" fill="#fff" fill-opacity="0.87"/><rect x="1030.05" y="853.20" width="2" height="1.95" fill="#fff" fill-opacity="0.74"/><rect x="1030.05" y="856.10" width="2" height="1.95" fill="#fff" fill-opacity="0.61"/><rect x="1030.05" y="859.00" width="2" height="1.95" fill="#fff" fill-opacity="0.48"/><rect x="1033.00" y="847.40" width="2" height="1.95" fill="#fff" fill-opacity="1.00"/><rect x="1033.00" y="850.30" width="2" height="1.95" fill="#fff" fill-opacity="0.87"/><rect x="1033.00" y="853.20" width="2" height="1.95" fill="#fff" fill-opacity="0.74"/><rect x="1033.00" y="856.10" width="2" height="1.95" fill="#fff" fill-opacity="0.61"/><rect x="1033.00" y="859.00" width="2" height="1.95" fill="#fff" fill-opacity="0.48"/><polygon points="1038.3,852.2 1044.3,852.2 1041.3,856.2" fill="#2a2a2a"/><rect x="1051.5" y="847.4" width="6.6" height="5.8" rx="1.2" fill="#a9c5e7" stroke="#2a4a80" stroke-width="1.1"/><rect x="1053.7" y="849.4" width="2.3" height="1.7" fill="#8db0dc"/><rect x="1059" y="847.4" width="6.6" height="5.8" rx="1.2" fill="#a9c5e7" stroke="#2a4a80" stroke-width="1.1"/><rect x="1061.2" y="849.4" width="2.3" height="1.7" fill="#8db0dc"/><rect x="1051.5" y="854.2" width="6.6" height="5.8" rx="1.2" fill="#a9c5e7" stroke="#2a4a80" stroke-width="1.1"/><rect x="1053.7" y="856.2" width="2.3" height="1.7" fill="#8db0dc"/><rect x="1059" y="854.2" width="6.6" height="5.8" rx="1.2" fill="#a9c5e7" stroke="#2a4a80" stroke-width="1.1"/><rect x="1061.2" y="856.2" width="2.3" height="1.7" fill="#8db0dc"/><polygon points="1069.2,852.2 1075.2,852.2 1072.2,856.2" fill="#2a2a2a"/></svg>
<div id="toolbar"><div class="line"></div>
<div class="abs" style="left:0;top:0;width:1px;height:85px;background:#e2e2e2"></div>
<div class="abs" style="left:681px;top:0;width:69px;height:22px;background:#cde9f6"></div>
<div class="abs" style="left:681px;top:20.3px;width:69px;height:3px;background:#0696d7;border-radius:1.5px"></div>
<div class="abs" style="left:1444px;top:22px;width:108px;height:59.5px;background:#cde9f6"></div>
<div id="design"></div>
<div class="sep" style="left:394px"></div>
<div class="sep" style="left:577px"></div>
<div class="sep" style="left:1104px"></div>
<div class="sep" style="left:1183px"></div>
<div class="sep" style="left:1366px"></div>
<div class="t" style="left:150.0px;top:4.8px;font-size:11.2px;line-height:13px;transform:scaleX(0.923);">SOLID</div>
<div class="t" style="left:228.0px;top:4.8px;font-size:11.2px;line-height:13px;transform:scaleX(0.908);">SURFACE</div>
<div class="t" style="left:321.0px;top:4.8px;font-size:11.2px;line-height:13px;transform:scaleX(0.928);">MESH</div>
<div class="t" style="left:394.0px;top:4.8px;font-size:11.2px;line-height:13px;transform:scaleX(0.939);">SHEET METAL</div>
<div class="t" style="left:512.0px;top:4.8px;font-size:11.2px;line-height:13px;transform:scaleX(0.922);">PLASTIC</div>
<div class="t" style="left:600.0px;top:4.8px;font-size:11.2px;line-height:13px;transform:scaleX(0.938);">UTILITIES</div>
<div class="t" style="left:693.0px;top:4.8px;font-size:11.2px;line-height:13px;font-weight:700;color:#0a8fd6;transform:scaleX(0.957);-webkit-text-stroke-width:.05px;">SKETCH</div>
<div class="t" style="left:41.2px;top:34.7px;font-size:10.8px;line-height:13px;font-weight:700;color:#333;-webkit-text-stroke-width:.05px;">DESIGN</div>
<div class="dd" style="left:87px;top:39.5px"></div>
<div class="t" style="left:233.0px;top:65.5px;font-size:11.2px;line-height:13px;transform:scaleX(0.898);">CREATE</div>
<div class="dd" style="left:276px;top:69.5px"></div>
<div class="t" style="left:458.0px;top:65.5px;font-size:11.2px;line-height:13px;transform:scaleX(1.034);">MODIFY</div>
<div class="dd" style="left:503.5px;top:69.5px"></div>
<div class="t" style="left:796.0px;top:65.5px;font-size:11.2px;line-height:13px;transform:scaleX(0.935);">CONSTRAINTS</div>
<div class="dd" style="left:874px;top:69.5px"></div>
<div class="t" style="left:1118.0px;top:65.5px;font-size:11.2px;line-height:13px;transform:scaleX(0.928);">INSPECT</div>
<div class="dd" style="left:1165px;top:69.5px"></div>
<div class="t" style="left:1249.0px;top:65.5px;font-size:11.2px;line-height:13px;transform:scaleX(0.906);">INSERT</div>
<div class="dd" style="left:1289px;top:69.5px"></div>
<div class="t" style="left:1381.0px;top:65.5px;font-size:11.2px;line-height:13px;transform:scaleX(0.919);">SELECT</div>
<div class="dd" style="left:1422.5px;top:69.5px"></div>
<div class="t" style="left:1454.4px;top:65.5px;font-size:11.2px;line-height:13px;transform:scaleX(0.916);">FINISH SKETCH</div>
<div class="dd" style="left:1535px;top:69.5px"></div>
<svg width="1920" height="85" viewBox="0 0 1920 85" style="left:0;top:0">
<path d="M140.5 50.4H156.5 M160.3 35.5A7.45 7.45 0 0 1 160.3 50.4" stroke="#555" stroke-width="1.2" fill="none"/><rect x="137.0" y="48.8" width="3.2" height="3.2" fill="#1789e6"/><rect x="156.8" y="48.8" width="3.2" height="3.2" fill="#1789e6"/><rect x="156.8" y="33.9" width="3.2" height="3.2" fill="#1789e6"/><path d="M183.5 32.5H209.5V50.3 M181.4 34.5V52.3H207.5" stroke="#555" stroke-width="1.2" fill="none"/><rect x="179.8" y="30.9" width="3.2" height="3.2" fill="#1789e6"/><rect x="207.9" y="50.7" width="3.2" height="3.2" fill="#1789e6"/><circle cx="238.4" cy="42.3" r="15.3" stroke="#555" stroke-width="1.1" fill="none"/><path d="M231.5 49.3L235.8 45 M241 39.8L245.5 35.2" stroke="#1789e6" stroke-width="1.4" fill="none"/><polygon points="229,51.8 231,46.6 234.2,49.8" fill="#1789e6"/><polygon points="248,32.8 246,38 242.8,34.8" fill="#1789e6"/><rect x="236.8" y="40.8" width="3.2" height="3.2" fill="#1789e6"/><path d="M267.4 55.5C267.6 47 269.5 41.5 271.8 39 M276 38C281 40.5 284 46 288.5 48 M292.5 46.5C295.5 43.5 296.5 38 296.6 30.8" stroke="#555" stroke-width="1.1" fill="none"/><rect x="265.8" y="55.8" width="3.2" height="3.2" fill="#1789e6"/><rect x="271.8" y="35.8" width="3.2" height="3.2" fill="#1789e6"/><rect x="288.7" y="46.8" width="3.2" height="3.2" fill="#1789e6"/><rect x="294.9" y="27.0" width="3.2" height="3.2" fill="#1789e6"/><path d="M323.4 29.5V57.3H310.2Z" stroke="#555" stroke-width="1.1" fill="none"/><path d="M325.6 29.5V57.3H338.8Z" stroke="#1789e6" stroke-width="1.1" fill="none"/><path d="M352.4 29V56.8 M383.5 29V56.8" stroke="#555" stroke-width="1.1" fill="none"/><path d="M356 37.6H380" stroke="#1789e6" stroke-width="1.3"/><polygon points="353.2,37.6 357.8,34.8 357.8,40.4" fill="#1789e6"/><polygon points="382.7,37.6 378.1,34.8 378.1,40.4" fill="#1789e6"/>
<path d="M406.3 45.9A18.7 18.6 0 0 1 425 27.3" stroke="#1789e6" stroke-width="1.3" fill="none"/><path d="M426.3 27.3H438 M406.3 47.2V59" stroke="#555" stroke-width="1.1" fill="none"/><path d="M449 29.3H465.5" stroke="#1789e6" stroke-width="1.1" stroke-dasharray="4.2 1.6" fill="none"/><path d="M473.2 29.3H481" stroke="#555" stroke-width="1.1" fill="none"/><polygon points="467.3,27.3 471,31 471,45.6 467.3,43.4" fill="#2b2b2b"/><polygon points="457,33 457,38 467.4,48.3 470.4,45.8" fill="#2b2b2b"/><ellipse cx="466.8" cy="53.3" rx="2.8" ry="4.3" transform="rotate(14 466.8 53.3)" stroke="#2b2b2b" stroke-width="1.8" fill="none"/><ellipse cx="474.5" cy="50.6" rx="4.2" ry="2.9" transform="rotate(32 474.5 50.6)" stroke="#2b2b2b" stroke-width="1.8" fill="none"/><circle cx="468.6" cy="46.6" r="1.1" fill="#f1f1f1"/><path d="M524 31.4H503.6A11.6 11.6 0 0 0 503.6 54.6H524" stroke="#1789e6" stroke-width="1.4" fill="none"/><path d="M524 36.5H504.8A6.5 6.5 0 0 0 504.8 49.5H524" stroke="#555" stroke-width="1.1" fill="none"/><path d="M535.4 58.5C535.6 53 536.3 48 537.3 45 M565 43C566 38 566.5 33 566.5 27" stroke="#555" stroke-width="1.1" fill="none"/><path d="M537.3 45C539 39.5 541.5 36.5 544 37.3C549 38.8 553 48.5 559 50.2C562 50.8 564 47.5 565 43" stroke="#1789e6" stroke-width="1.3" fill="none"/>
<path d="M603.6 29V46 M599 30L603.6 34 M599 35.5L603.6 39.5 M599 41L603.6 45 M596 52.5H613 M597 57L601 52.5 M602.3 57L606.3 52.5 M607.6 57L611.6 52.5" stroke="#cc2020" stroke-width="1.1" fill="none"/><path d="M606.5 29V46 M596 49.5H613" stroke="#555" stroke-width="1.1" fill="none"/><path d="M633.5 27V55.5" stroke="#cc2020" stroke-width="1.2"/><path d="M636 57.5H664" stroke="#555" stroke-width="1.1"/><rect x="632.0" y="56.0" width="3" height="3" fill="#cc2020"/><circle cx="687" cy="46.2" r="11.9" stroke="#cc2020" stroke-width="1.1" fill="none"/><path d="M686 28L705.7 47.5" stroke="#555" stroke-width="1.1"/><rect x="724" y="36" width="20" height="3.8" fill="#cc2020"/><rect x="724" y="46.2" width="20" height="3.8" fill="#666"/><path d="M765.4 49.5L783.6 31.4" stroke="#cc2020" stroke-width="1.1"/><path d="M770.3 54.6L788.5 36.3" stroke="#555" stroke-width="1.1"/><path d="M807.2 35.3L827.6 55.5" stroke="#cc2020" stroke-width="1.1"/><path d="M817.9 45L832.6 30.5" stroke="#555" stroke-width="1.1"/><path d="M855.3 41V36.5A7.1 7.1 0 0 1 869.5 36.5V41" stroke="#d24848" stroke-width="3" fill="none"/><path d="M855.3 41V36.5A7.1 7.1 0 0 1 869.5 36.5V41" stroke="#e9a3a3" stroke-width="1" fill="none"/><rect x="850.7" y="41.2" width="23.6" height="17" fill="#e09090" stroke="#d24848" stroke-width="1.2"/><path d="M862.4 46.3V52" stroke="#cc2020" stroke-width="1.1"/><path d="M906 34L919 55.3H893Z" stroke="#cc2020" stroke-width="1.3" fill="none"/><circle cx="949" cy="42.8" r="13.8" stroke="#cc2020" stroke-width="1.1" fill="none"/><circle cx="949" cy="42.8" r="7.9" stroke="#444" stroke-width="1.1" fill="none"/><path d="M978.5 56L995.5 39.5" stroke="#333" stroke-width="1.1"/><path d="M996.7 38.3L1005 30" stroke="#cc2020" stroke-width="1.1"/><path d="M978.3 36.3L985 43" stroke="#222" stroke-width="1.2"/><polygon points="987.8,45.8 981.6,43.8 985.8,39.6" fill="#222"/><path d="M1029.8 33.5H1022.5V52.5H1029.8" stroke="#cc2020" stroke-width="1.2" fill="none"/><path d="M1034.4 29V57" stroke="#cc2020" stroke-width="1.2" stroke-dasharray="10 2 4 2" fill="none"/><path d="M1039 33.5H1046.3V52.5H1039" stroke="#555" stroke-width="1.2" fill="none"/><path d="M1066 36.3C1067.5 41.5 1074 39 1077.5 41.5 M1079.8 44C1081 49 1081 52.5 1084.5 54.5" stroke="#555" stroke-width="1.1" fill="none"/><path d="M1071 31L1090 50" stroke="#cc2020" stroke-width="1.1"/><rect x="1079.0" y="39.0" width="3" height="3" fill="#cc2020"/>
<rect x="1130" y="44.8" width="28" height="6" fill="#f5a400"/><path d="M1133.2 45V47 M1136.4 45V47.8 M1139.6 45V47 M1142.8 45V47.8 M1146 45V47 M1149.2 45V47.8 M1152.4 45V47 M1155.6 45V47.8" stroke="#6b5a2a" stroke-width=".8"/><path d="M1130.5 35V43.5 M1157.6 35V43.5 M1133 39.5H1155" stroke="#666" stroke-width="1.1" fill="none"/><polygon points="1131.3,39.5 1135,37.3 1135,41.7" fill="#666"/><polygon points="1156.8,39.5 1153.1,37.3 1153.1,41.7" fill="#666"/><polygon points="1196.3,35.6 1204.3,28.4 1223.8,28.4 1216,35.6" fill="#f4f4f4"/><polygon points="1216,35.6 1223.8,28.4 1223.8,48 1216,55.6" fill="#b9b9b9"/><rect x="1196.3" y="35.6" width="19.7" height="20" fill="#d9d9d9"/><path d="M1216 55.6H1196.3V35.6L1204.3 28.4H1223.8V48" stroke="#555" stroke-width="1.2" fill="none"/><rect x="1210.4" y="42.1" width="16.4" height="16.2" rx="2" fill="#76a3c4" stroke="#a9c8de" stroke-width="1.2"/><path d="M1215.5 47L1223.5 51.5" stroke="#fff" stroke-width="2.6"/><path d="M1214 53H1220 M1213.5 55.3H1222" stroke="#dbe8f1" stroke-width="1"/><path d="M1244.4 46V27.5H1259 M1269.6 37.5V46" stroke="#555" stroke-width="1.2" fill="none"/><rect x="1244.4" y="27.5" width="25" height="19" fill="#fff" opacity=".0"/><polygon points="1260,27.3 1269.8,37 1260,37" fill="#eaa522"/><rect x="1244" y="46.2" width="26" height="12.5" fill="#e9a01c"/><polygon points="1238,35 1246.2,35 1246.2,31 1255.6,37 1246.2,43 1246.2,39 1238,39" fill="#1789e6"/><circle cx="1249.5" cy="52.5" r="2.7" stroke="#222" stroke-width="1.3" fill="none" stroke-dasharray="1.4 .75"/><circle cx="1249.5" cy="52.5" r="3.5" stroke="#222" stroke-width="1.2" fill="none" stroke-dasharray="1.2 1.55"/><text x="1255" y="56" font-family="Liberation Sans, sans-serif" font-weight="700" font-size="8.2" fill="#fff" textLength="14" lengthAdjust="spacingAndGlyphs">SVG</text><polygon points="1286,37 1293,29 1311.7,29 1305,37" fill="#fff"/><polygon points="1305,37 1311.7,29 1311.7,49 1305,55.6" fill="#c9cdd5"/><rect x="1286" y="37" width="19" height="18.6" fill="#e4e4e7"/><path d="M1286 37L1293 29H1311.7V49L1305 55.6H1286V37" stroke="#333" stroke-width="1.3" fill="none"/><path d="M1282 50C1284 46.5 1287 44.5 1290.5 44.3V40.3L1298 45.6L1290.5 51.6V47.6C1287.5 47.6 1284.5 48.5 1282 50Z" fill="#3b3d42"/><rect x="1325.3" y="28.5" width="28.4" height="28" fill="#86caff" stroke="#4b9bd6" stroke-width=".8"/><path d="M1325.7 47C1329 43 1331.5 40.3 1334 40.3C1337.5 40.3 1340.5 49 1343.5 50C1345.5 49.5 1347 46.6 1348.5 46.6C1350.3 46.6 1352 49 1353.3 51.5V56.1H1325.7Z" fill="#3f92cc"/><circle cx="1346" cy="36" r="3.1" fill="#ffffd0"/><rect x="1385" y="24" width="38" height="37.8" fill="#0696d7"/><rect x="1388.6" y="27.4" width="26.8" height="21.2" fill="none" stroke="#7fe97f" stroke-width="1.2" stroke-dasharray="4.2 2.2"/><polygon points="1409,41 1409,55.5 1412.3,52.6 1415,58.6 1417.6,57.4 1415,51.6 1419.5,51.4" fill="#fff"/><circle cx="1498" cy="42.9" r="15.4" fill="#66c800"/><path d="M1490.4 43.2L1496.3 49L1506.3 38.4" stroke="#fff" stroke-width="3.3" fill="none"/>
</svg>
</div>
<div class="abs" style="left:0;top:872px;width:1920px;height:1px;background:#cfcfcf"></div>
</div></body></html>
